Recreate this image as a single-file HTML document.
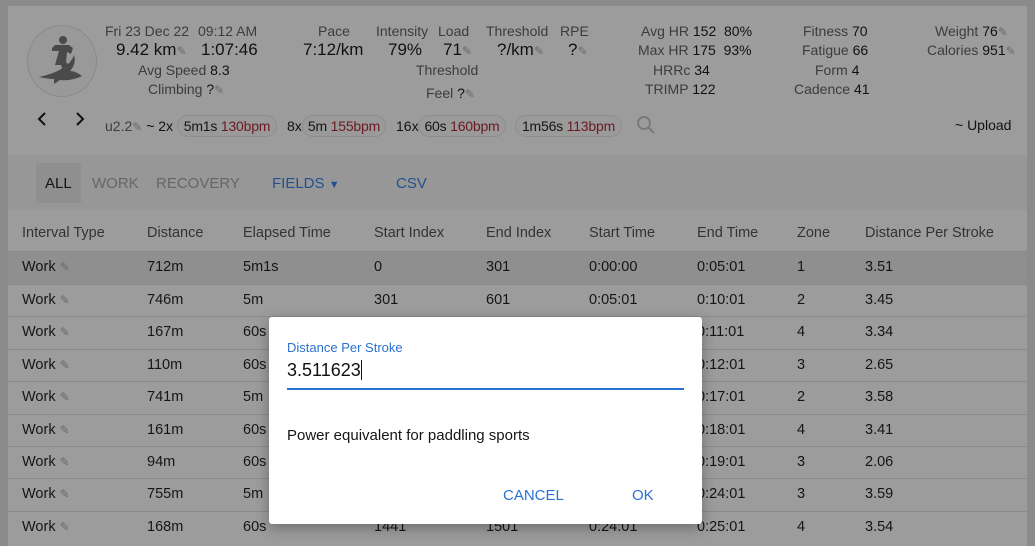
<!DOCTYPE html>
<html><head><meta charset="utf-8"><style>
body{margin:0;width:1035px;height:540px;overflow:hidden;background:#8b8b8b;font-family:"Liberation Sans",sans-serif;position:relative}
.a{position:absolute;white-space:nowrap}
.card{position:absolute;left:8px;top:6px;width:1019px;height:540px;background:#9c9c9c}
.lab{color:#3c3c3c;font-size:14px}
.v{color:#121212;font-size:14px}
.big{color:#111;font-size:17px}
.pen{color:#6a6a6a;font-size:12px}
.chip{position:absolute;top:115px;height:22px;box-sizing:border-box;border:1px solid #8e8e8e;border-radius:11px;font-size:14px;line-height:20px;text-align:center;color:#151515;background:#9a9a9a;white-space:nowrap;letter-spacing:-0.2px}
.chip b{font-weight:normal;color:#6b1a22}
.th{color:#333;font-size:14.5px}
.td{color:#151515;font-size:14.5px}
.line{position:absolute;left:8px;width:1019px;height:1px;background:#8a8a8a}
</style></head><body>
<div class="card"></div>
<div style="position:absolute;left:8px;top:155px;width:1019px;height:55px;background:#979797"></div>
<div style="position:absolute;left:8px;top:251px;width:1019px;height:33px;background:#8f8f8f"></div>
<div style="position:absolute;left:27px;top:25px;width:68px;height:70px;border-radius:50%;border:1px solid #8a8a8a;background:#999"></div>
<svg class="a" style="left:35px;top:35px" width="52" height="52" viewBox="0 0 52 52"><g fill="#4a4a4a"><circle cx="28" cy="5" r="4"/><path d="M20 10h14l4 3-2 6-4-2-1 10 6 6-8 5-3-8-6 0 2-7 2-7-7 0 0-3z"/><path d="M4 42c8-2 16-4 22-8 6-3 11-8 13-14 2 6 0 12-4 16 4 0 8 2 12 5-6 3-14 5-22 4l-6 4 0-5c-5 0-10-1-15-2z"/></g></svg>
<div class="a lab" style="left:105px;top:23px">Fri 23 Dec 22</div>
<div class="a lab" style="left:198px;top:23px">09:12 AM</div>
<div class="a big" style="left:116px;top:40px">9.42 km<span class="pen">✎</span></div>
<div class="a big" style="left:201px;top:40px">1:07:46</div>
<div class="a lab" style="left:138px;top:62px">Avg Speed <span class="v">8.3</span></div>
<div class="a lab" style="left:148px;top:81px">Climbing <span class="v">?</span><span class="pen">✎</span></div>
<div class="a lab" style="left:318px;top:23px">Pace</div>
<div class="a big" style="left:303px;top:40px">7:12/km</div>
<div class="a lab" style="left:376px;top:23px">Intensity</div>
<div class="a big" style="left:388px;top:40px">79%</div>
<div class="a lab" style="left:438px;top:23px">Load</div>
<div class="a big" style="left:443px;top:40px">71<span class="pen">✎</span></div>
<div class="a lab" style="left:416px;top:62px">Threshold</div>
<div class="a lab" style="left:426px;top:85px">Feel <span class="v">?</span><span class="pen">✎</span></div>
<div class="a lab" style="left:486px;top:23px">Threshold</div>
<div class="a big" style="left:497px;top:40px">?/km<span class="pen">✎</span></div>
<div class="a lab" style="left:560px;top:23px">RPE</div>
<div class="a big" style="left:568px;top:40px">?<span class="pen">✎</span></div>
<div class="a lab" style="left:641px;top:23px">Avg HR <span class="v">152&nbsp; 80%</span></div>
<div class="a lab" style="left:638px;top:42px">Max HR <span class="v">175&nbsp; 93%</span></div>
<div class="a lab" style="left:653px;top:62px">HRRc <span class="v">34</span></div>
<div class="a lab" style="left:645px;top:81px">TRIMP <span class="v">122</span></div>
<div class="a lab" style="left:803px;top:23px">Fitness <span class="v">70</span></div>
<div class="a lab" style="left:802px;top:42px">Fatigue <span class="v">66</span></div>
<div class="a lab" style="left:815px;top:62px">Form <span class="v">4</span></div>
<div class="a lab" style="left:794px;top:81px">Cadence <span class="v">41</span></div>
<div class="a lab" style="left:935px;top:23px">Weight <span class="v">76</span><span class="pen">✎</span></div>
<div class="a lab" style="left:927px;top:42px">Calories <span class="v">951</span><span class="pen">✎</span></div>
<svg class="a" style="left:36px;top:111px" width="12" height="16"><path d="M9 2L3 8l6 6" fill="none" stroke="#111" stroke-width="2"/></svg>
<svg class="a" style="left:74px;top:111px" width="12" height="16"><path d="M3 2l6 6-6 6" fill="none" stroke="#111" stroke-width="2"/></svg>
<div class="a lab" style="left:105px;top:118px">u2.2<span class="pen">✎</span> <span class="v">~ 2x</span></div>
<div class="chip" style="left:177px;width:100px">5m1s <b>130bpm</b></div>
<div class="a v" style="left:287px;top:118px">8x</div>
<div class="chip" style="left:302px;width:84px">5m <b>155bpm</b></div>
<div class="a v" style="left:396px;top:118px">16x</div>
<div class="chip" style="left:418px;width:88px">60s <b>160bpm</b></div>
<div class="chip" style="left:515px;width:107px">1m56s <b>113bpm</b></div>
<svg class="a" style="left:636px;top:115px" width="20" height="20"><circle cx="8" cy="8" r="6" fill="none" stroke="#7a7a7a" stroke-width="2"/><path d="M12 12l6 6" stroke="#7a7a7a" stroke-width="2.2"/></svg>
<div class="a v" style="left:955px;top:117px">~ Upload</div>
<div style="position:absolute;left:36px;top:163px;width:45px;height:40px;background:#8f8f8f"></div>
<div class="a" style="left:45px;top:175px;font-size:15px;color:#151515">ALL</div>
<div class="a" style="left:92px;top:175px;font-size:15px;color:#666">WORK</div>
<div class="a" style="left:156px;top:175px;font-size:15px;color:#666">RECOVERY</div>
<div class="a" style="left:272px;top:175px;font-size:15px;color:#23508f">FIELDS <span style="font-size:11px">▼</span></div>
<div class="a" style="left:396px;top:175px;font-size:15px;color:#23508f">CSV</div>
<div class="a th" style="left:22px;top:225px">Interval Type</div>
<div class="a th" style="left:147px;top:225px">Distance</div>
<div class="a th" style="left:243px;top:225px">Elapsed Time</div>
<div class="a th" style="left:374px;top:225px">Start Index</div>
<div class="a th" style="left:486px;top:225px">End Index</div>
<div class="a th" style="left:589px;top:225px">Start Time</div>
<div class="a th" style="left:697px;top:225px">End Time</div>
<div class="a th" style="left:797px;top:225px">Zone</div>
<div class="a th" style="left:865px;top:225px">Distance Per Stroke</div>
<div class="line" style="top:251px"></div><div class="line" style="top:284px"></div><div class="line" style="top:316px"></div><div class="line" style="top:349px"></div><div class="line" style="top:381px"></div><div class="line" style="top:414px"></div><div class="line" style="top:446px"></div><div class="line" style="top:478px"></div><div class="line" style="top:511px"></div>
<div class="a td" style="left:22px;top:259px">Work <span class="pen">✎</span></div><div class="a td" style="left:147px;top:259px">712m</div><div class="a td" style="left:243px;top:259px">5m1s</div><div class="a td" style="left:374px;top:259px">0</div><div class="a td" style="left:486px;top:259px">301</div><div class="a td" style="left:589px;top:259px">0:00:00</div><div class="a td" style="left:697px;top:259px">0:05:01</div><div class="a td" style="left:797px;top:259px">1</div><div class="a td" style="left:865px;top:259px">3.51</div>
<div class="a td" style="left:22px;top:292px">Work <span class="pen">✎</span></div><div class="a td" style="left:147px;top:292px">746m</div><div class="a td" style="left:243px;top:292px">5m</div><div class="a td" style="left:374px;top:292px">301</div><div class="a td" style="left:486px;top:292px">601</div><div class="a td" style="left:589px;top:292px">0:05:01</div><div class="a td" style="left:697px;top:292px">0:10:01</div><div class="a td" style="left:797px;top:292px">2</div><div class="a td" style="left:865px;top:292px">3.45</div>
<div class="a td" style="left:22px;top:324px">Work <span class="pen">✎</span></div><div class="a td" style="left:147px;top:324px">167m</div><div class="a td" style="left:243px;top:324px">60s</div><div class="a td" style="left:697px;top:324px">0:11:01</div><div class="a td" style="left:797px;top:324px">4</div><div class="a td" style="left:865px;top:324px">3.34</div>
<div class="a td" style="left:22px;top:357px">Work <span class="pen">✎</span></div><div class="a td" style="left:147px;top:357px">110m</div><div class="a td" style="left:243px;top:357px">60s</div><div class="a td" style="left:697px;top:357px">0:12:01</div><div class="a td" style="left:797px;top:357px">3</div><div class="a td" style="left:865px;top:357px">2.65</div>
<div class="a td" style="left:22px;top:389px">Work <span class="pen">✎</span></div><div class="a td" style="left:147px;top:389px">741m</div><div class="a td" style="left:243px;top:389px">5m</div><div class="a td" style="left:697px;top:389px">0:17:01</div><div class="a td" style="left:797px;top:389px">2</div><div class="a td" style="left:865px;top:389px">3.58</div>
<div class="a td" style="left:22px;top:422px">Work <span class="pen">✎</span></div><div class="a td" style="left:147px;top:422px">161m</div><div class="a td" style="left:243px;top:422px">60s</div><div class="a td" style="left:697px;top:422px">0:18:01</div><div class="a td" style="left:797px;top:422px">4</div><div class="a td" style="left:865px;top:422px">3.41</div>
<div class="a td" style="left:22px;top:454px">Work <span class="pen">✎</span></div><div class="a td" style="left:147px;top:454px">94m</div><div class="a td" style="left:243px;top:454px">60s</div><div class="a td" style="left:697px;top:454px">0:19:01</div><div class="a td" style="left:797px;top:454px">3</div><div class="a td" style="left:865px;top:454px">2.06</div>
<div class="a td" style="left:22px;top:486px">Work <span class="pen">✎</span></div><div class="a td" style="left:147px;top:486px">755m</div><div class="a td" style="left:243px;top:486px">5m</div><div class="a td" style="left:697px;top:486px">0:24:01</div><div class="a td" style="left:797px;top:486px">3</div><div class="a td" style="left:865px;top:486px">3.59</div>
<div class="a td" style="left:22px;top:519px">Work <span class="pen">✎</span></div><div class="a td" style="left:147px;top:519px">168m</div><div class="a td" style="left:243px;top:519px">60s</div><div class="a td" style="left:374px;top:519px">1441</div><div class="a td" style="left:486px;top:519px">1501</div><div class="a td" style="left:589px;top:519px">0:24:01</div><div class="a td" style="left:697px;top:519px">0:25:01</div><div class="a td" style="left:797px;top:519px">4</div><div class="a td" style="left:865px;top:519px">3.54</div>
<div style="position:absolute;left:269px;top:317px;width:433px;height:207px;background:#fff;border-radius:3px;box-shadow:0 4px 14px rgba(0,0,0,.3)"></div>
<div class="a" style="left:287px;top:340px;font-size:13px;color:#2a72d0">Distance Per Stroke</div>
<div class="a" style="left:287px;top:360px;font-size:18px;color:#111">3.511623<span style="display:inline-block;width:1px;height:20px;background:#111;vertical-align:-4px"></span></div>
<div style="position:absolute;left:287px;top:388px;width:397px;height:2px;background:#2a72d0"></div>
<div class="a" style="left:287px;top:427px;font-size:15px;color:#151515">Power equivalent for paddling sports</div>
<div class="a" style="left:503px;top:487px;font-size:15px;color:#2a72d0">CANCEL</div>
<div class="a" style="left:632px;top:487px;font-size:15px;color:#2a72d0">OK</div>
</body></html>
